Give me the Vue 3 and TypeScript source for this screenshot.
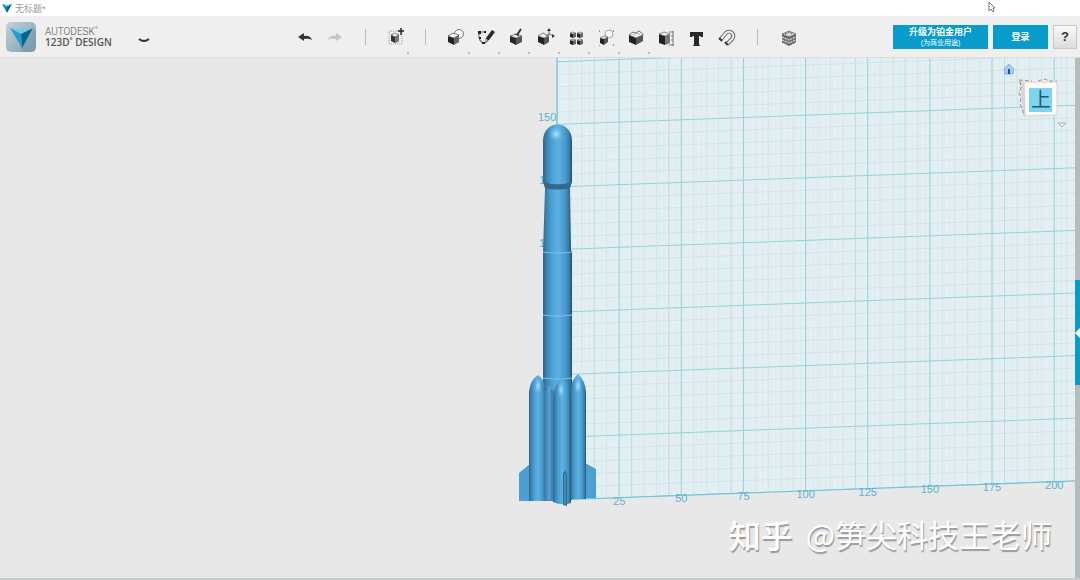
<script setup lang="ts">
import { ref } from 'vue'

interface Tool { id: string; label: string; more: boolean }

const tools: Tool[] = [
  { id: 'primitives', label: '基本体', more: true },
  { id: 'sketch', label: '草图', more: true },
  { id: 'construct', label: '构造', more: true },
  { id: 'modify', label: '修改', more: true },
  { id: 'pattern', label: '阵列', more: true },
  { id: 'group', label: '分组', more: true },
  { id: 'combine', label: '合并', more: true },
  { id: 'measure', label: '测量', more: false },
  { id: 'text', label: '文本', more: false },
  { id: 'snap', label: '吸附', more: false },
]
const active = ref('')

// Work plane geometry
const originX = 557
const originY = 500
const stepX = 62.15
const stepY = 62.6
const slope = -0.037
const planeRight = 1075

const verticals = Array.from({ length: 42 }, (_, i) => {
  const x = originX + (i * stepX) / 5
  return { x, y: originY + (x - originX) * slope, major: i % 5 === 0, strong: [3, 6, 9, 14, 24, 28, 36].includes(i) }
})
const fineVerticals = Array.from({ length: 208 }, (_, i) => {
  const x = originX + (i * stepX) / 25
  return { x, y: originY + (x - originX) * slope, show: i % 5 === 1 || i % 5 === 3 }
}).filter((l) => l.show)
const horizontals = Array.from({ length: 43 }, (_, i) => {
  const y = originY - (i * stepY) / 5
  return { y, y2: y + (planeRight - originX) * slope, major: i % 5 === 0 }
})
const axisLabels = [25, 50, 75, 100, 125, 150, 175, 200].map((v, i) => ({
  v,
  x: originX + (i + 1) * stepX,
  y: Math.round(originY + (i + 1) * stepX * slope + 7),
}))
</script>

<template>
  <div class="app">
    <div class="titlebar">
      <svg class="title-mark" viewBox="0 0 12 12" aria-hidden="true">
        <path d="M1 2L6 4L6 11Z" fill="#1683ad" /><path d="M11 2L6 4L6 11Z" fill="#0b5c80" /><path d="M1 2L6 3L11 2L6 5Z" fill="#52c0dd" />
      </svg>
      <span>无标题*</span>
    </div>

    <header class="header">
      <div class="brand">
        <svg class="logo" viewBox="0 0 30 30" aria-hidden="true">
          <defs>
            <linearGradient id="lg" x1="0" y1="0" x2="1" y2="1"><stop offset="0" stop-color="#c3d3da" /><stop offset="1" stop-color="#7c9dab" /></linearGradient>
          </defs>
          <rect width="30" height="30" rx="5" fill="url(#lg)" />
          <path d="M15 25L28 7L30 9V25Q30 30 25 30H18Z" fill="#7799a9" opacity=".6" />
          <path d="M4 6L15 11L16 26Z" fill="#259dc9" />
          <path d="M27 6L15 11L16 26Z" fill="#0a648d" />
          <path d="M4 6L15 8L27 6L15 12Z" fill="#67cbe4" />
        </svg>
        <div class="names"><span class="maker">AUTODESK˚</span><span class="product">123D˚ DESIGN</span></div>
        <button class="menu" type="button" aria-label="菜单">
          <svg viewBox="0 0 12 8"><path d="M1 3Q6 7 11 3" fill="none" stroke="#333" stroke-width="2" /></svg>
        </button>
      </div>

      <nav class="toolbar" aria-label="工具栏">
        <button class="tool" type="button" aria-label="撤消">
          <svg viewBox="0 0 30 40"><path d="M8 20L14 16V19Q20 18 22 23Q19 21 14 22V24Z" fill="#333" /></svg>
        </button>
        <button class="tool" type="button" aria-label="重做" disabled>
          <svg viewBox="0 0 30 40"><path d="M22 20L16 16V19Q10 18 8 23Q11 21 16 22V24Z" fill="#c4c4c4" /></svg>
        </button>
        <span class="sep"></span>
        <button class="tool more" type="button" aria-label="插入">
          <svg viewBox="0 0 30 40">
            <rect x="9" y="14" width="13" height="13" fill="none" stroke="#999" stroke-dasharray="1 1" />
            <path d="M11 18L15 17L19 18V24L15 26L11 24Z" fill="#333" /><path d="M11 18L15 16L19 18L15 20Z" fill="#eee" stroke="#444" stroke-width=".6" /><path d="M15 20L19 18V24L15 26Z" fill="#777" />
            <path d="M21 11V18M18 14H24" stroke="#222" stroke-width="1.4" />
          </svg>
        </button>
        <span class="sep"></span>
        <div class="tools">
          <button v-for="t in tools" :key="t.id" class="tool" :class="{ more: t.more }" type="button" :aria-label="t.label" :aria-pressed="active === t.id" @click="active = t.id">
            <svg viewBox="0 0 30 40">
              <g v-if="t.id === 'primitives'">
                <circle cx="18" cy="17" r="4.5" fill="#f5f5f5" stroke="#777" />
                <path d="M7 19L13 21V28L7 25Z" fill="#222" /><path d="M13 21L18 18V25L13 28Z" fill="#666" /><path d="M7 19L12 16L18 18L13 21Z" fill="#f4f4f4" stroke="#555" stroke-width=".7" />
              </g>
              <g v-else-if="t.id === 'sketch'">
                <path d="M8 15Q7 24 12 26Q16 26 17 22M8 15H14" fill="none" stroke="#777" stroke-width="1.2" />
                <g fill="#222"><rect x="7" y="14" width="3" height="3" /><rect x="8" y="20" width="2" height="2" /><rect x="11" y="25" width="3" height="2" /><rect x="13" y="14" width="2" height="2" /></g>
                <path d="M21 13L24 15L18 23L14 25L15 21Z" fill="#292929" /><path d="M14 25L15 22L17 23Z" fill="#ddd" />
              </g>
              <g v-else-if="t.id === 'construct'">
                <path d="M9 19L15 21V28L9 25Z" fill="#252525" /><path d="M15 21L21 19V25L15 28Z" fill="#555" /><path d="M9 19L15 17L21 19L15 21Z" fill="#eee" stroke="#555" stroke-width=".7" />
                <path d="M20 12L16 18" stroke="#333" stroke-width="2" /><path d="M14 17L18 19" stroke="#333" />
              </g>
              <g v-else-if="t.id === 'modify'">
                <path d="M7 19L13 21V28L7 25Z" fill="#222" /><path d="M13 21L18 19V25L13 28Z" fill="#555" /><path d="M7 19L12 16L18 19L13 21Z" fill="#eee" stroke="#555" stroke-width=".7" />
                <path d="M18 12V17M18 17L23 19M18 17L15 19" fill="none" stroke="#666" /><path d="M16 14L18 11L20 14ZM21 17L24 19L21 21Z" fill="#333" />
              </g>
              <g v-else-if="t.id === 'pattern'">
                <g v-for="(p, i) in [[9, 15], [16, 15], [9, 22], [16, 22]]" :key="i" :transform="`translate(${p[0]} ${p[1]})`">
                  <path d="M0 1L3 2V6L0 5Z" fill="#222" /><path d="M3 2L6 1V5L3 6Z" fill="#666" /><path d="M0 1L3 0L6 1L3 2Z" fill="#ccc" stroke="#555" stroke-width=".5" />
                </g>
              </g>
              <g v-else-if="t.id === 'group'">
                <circle cx="18" cy="17" r="4" fill="#f5f5f5" stroke="#aaa" />
                <path d="M9 21L13 22V28L9 26Z" fill="#222" /><path d="M13 22L17 20V25L13 28Z" fill="#555" /><path d="M9 21L13 19L17 20L13 22Z" fill="#eee" stroke="#555" stroke-width=".6" />
                <g fill="#999"><path d="M8 13H9V15H8ZM22 13H23V15H22ZM8 28H9V29H8ZM22 27H23V29H22Z" /></g>
              </g>
              <g v-else-if="t.id === 'combine'">
                <path d="M8 18L15 21V28L8 25Z" fill="#222" /><path d="M15 21L22 18V24L15 28Z" fill="#555" /><path d="M8 18L12 15L15 16L18 14L22 17V18L15 21Z" fill="#f0f0f0" stroke="#555" stroke-width=".8" /><path d="M12 18L16 16L19 18" fill="none" stroke="#888" stroke-width=".7" />
              </g>
              <g v-else-if="t.id === 'measure'">
                <path d="M8 17L14 19V28L8 26Z" fill="#222" /><path d="M14 19L19 17V26L14 28Z" fill="#777" /><path d="M8 17L13 15L19 17L14 19Z" fill="#eee" stroke="#666" stroke-width=".7" />
                <path d="M22 14V29M18 15H23M20 19H22M20 23H22M18 28H23" stroke="#777" />
              </g>
              <path v-else-if="t.id === 'text'" d="M9 15H22V20H20L19 19H18V27L19 29H12L13 27V19H12L11 20H9Z" fill="#292929" />
              <g v-else>
                <path d="M10 22L15 16A4 4 0 0 1 21 22L16 27" fill="none" stroke="#666" stroke-width="4" /><path d="M10 22L15 16A4 4 0 0 1 21 22L16 27" fill="none" stroke="#f2f2f2" stroke-width="2" />
                <path d="M8 21L11 24M14 25L17 28" stroke="#333" stroke-width="2" />
              </g>
            </svg>
          </button>
        </div>
        <span class="sep"></span>
        <button class="tool last" type="button" aria-label="材质">
          <svg viewBox="0 0 30 40">
            <path d="M8 17L15 14L22 17V25L15 29L8 25Z" fill="#777" /><path d="M8 17L15 14L22 17L15 20Z" fill="#d8d8d8" stroke="#666" stroke-width=".7" />
            <path d="M8 20L15 23L22 20M8 23L15 26L22 23" fill="none" stroke="#eee" stroke-dasharray="2 1" /><path d="M8 18L15 21L22 18M8 25L15 28L22 25M11 17L15 15L19 17" fill="none" stroke="#555" stroke-dasharray="2 1" />
          </svg>
        </button>
      </nav>

      <div class="account">
        <button class="upgrade" type="button"><b>升级为铂金用户</b><small>(为商业用途)</small></button>
        <button class="login" type="button">登录</button>
        <button class="help" type="button" aria-label="帮助">?</button>
      </div>
    </header>

    <main class="workspace">
      <svg class="scene" viewBox="0 58 1080 520" preserveAspectRatio="xMidYMin slice" role="img" aria-label="火箭模型">
        <defs>
          <linearGradient id="metal">
            <stop offset="0" stop-color="#2d6586" /><stop offset=".12" stop-color="#3c83b1" /><stop offset=".3" stop-color="#4c9fd2" /><stop offset=".52" stop-color="#5bb1e2" /><stop offset=".75" stop-color="#4b9ccf" /><stop offset=".9" stop-color="#3a7fab" /><stop offset="1" stop-color="#244f6b" />
          </linearGradient>
          <radialGradient id="shine"><stop offset="0" stop-color="#b5e8ff" /><stop offset="1" stop-color="#62b7e7" stop-opacity="0" /></radialGradient>
          <clipPath id="plane"><path d="M557 58H1075V481L557 500Z" /></clipPath>
        </defs>
        <path d="M557 58H1075V481L557 500Z" fill="#e4eff2" />
        <g clip-path="url(#plane)">
          <line v-for="(l, i) in fineVerticals" :key="'f' + i" :x1="l.x" :x2="l.x" y1="58" :y2="l.y" class="fine" />
          <line v-for="(l, i) in horizontals" :key="'h' + i" :x1="originX" :x2="planeRight" :y1="l.y" :y2="l.y2" :class="l.major ? 'major' : 'minor'" />
          <line v-for="(l, i) in verticals" :key="'v' + i" :x1="l.x" :x2="l.x" y1="58" :y2="l.y" :class="l.major ? 'major' : l.strong ? 'strong' : 'minor'" />
        </g>
        <path d="M557 58V500L1075 481" fill="none" stroke="#6fc4da" stroke-width="1.2" />
        <g class="axis">
          <text v-for="l in axisLabels" :key="l.v" :x="l.x" :y="l.y" text-anchor="middle">{{ l.v }}</text>
          <text x="538" y="121">150</text><text x="539" y="184">125</text><text x="539" y="247">100</text>
        </g>

        <g class="rocket">
          <path d="M519 473L530 464V501H519ZM585 463L596 469V498H585Z" fill="#4b9fd2" />
          <path d="M543 251H572V500H543Z" fill="url(#metal)" />
          <path d="M545 188H570L571 252H543Z" fill="url(#metal)" />
          <path d="M543 181H572L569 189H546Z" fill="#376f91" />
          <path d="M543 141C543 119 572 119 572 141V182Q557 187 543 182Z" fill="url(#metal)" />
          <path d="M543 182Q557 187 572 182L570 188Q557 191 545 188Z" fill="#33698a" />
          <ellipse cx="556" cy="134" rx="8" ry="8" fill="url(#shine)" />
          <path d="M543 252Q557 254 572 252M543 315Q557 317 572 315M543 378Q557 380 572 378" fill="none" stroke="#7bc4eb" stroke-width="1.2" />
          <path d="M529 392Q530 380 538 375Q545 380 546 392V501H529Z" fill="url(#metal)" />
          <path d="M570 392Q571 380 578 374Q585 380 586 392V499H570Z" fill="url(#metal)" />
          <path d="M545 390H554V501H545Z" fill="#4288b7" />
          <path d="M549 386V500" stroke="#559fce" stroke-width="3" />
          <path d="M553 398Q554 384 562 379Q570 384 571 398V503Q562 506 553 502Z" fill="url(#metal)" />
          <ellipse cx="538" cy="386" rx="4" ry="9" fill="url(#shine)" /><ellipse cx="578" cy="386" rx="4" ry="9" fill="url(#shine)" /><ellipse cx="561" cy="390" rx="4" ry="9" fill="url(#shine)" />
          <path d="M563 474L565 470L567 475V506L563 505Z" fill="#2f6b90" /><path d="M565 474V505" stroke="#59aada" />
        </g>
      </svg>

      <div class="view-nav">
        <button class="home" type="button" aria-label="主视图">
          <svg viewBox="0 0 12 12"><path d="M1 6L6 1L11 6L10 11H2Z" fill="#a9c9ee" stroke="#8fb2dd" /><path d="M5 6H7V11H5Z" fill="#234f9c" /></svg>
        </button>
        <button class="cube" type="button" aria-label="视图方向">
          <svg viewBox="0 0 42 40">
            <path d="M2 2L12 4L9 38L5 37Z" fill="#d8d8d8" /><path d="M2 2H40V7H9Z" fill="#eee" />
            <path d="M6 4H39V37L7 38Z" fill="#fafafa" stroke="#ccc" stroke-width=".8" />
            <path d="M1 2L14 3M20 3L27 1L31 3L39 3M2 3L3 10L1 14L3 20L2 26L5 33L6 38" fill="none" stroke="#a08f8f" stroke-dasharray="4 2" />
            <rect x="11" y="10" width="23" height="24" fill="#7cd4ef" />
          </svg>
          <span>上</span>
        </button>
        <button class="view-menu" type="button" aria-label="视图选项">
          <svg viewBox="0 0 10 8"><path d="M1 2H9L5 6Z" fill="#f7f7f7" stroke="#aaa" /></svg>
        </button>
      </div>

      <p class="watermark"><b>知乎</b><span>@笋尖科技王老师</span></p>
      <aside class="drawer">
        <button class="drawer-handle" type="button" aria-label="展开面板"><svg viewBox="0 0 5 10"><path d="M5 0L0 5L5 10Z" fill="#fff" /></svg></button>
      </aside>
    </main>

    <svg class="pointer" viewBox="0 0 8 12" aria-hidden="true"><path d="M1 1V10L3 8L5 11L6 10L5 7H7Z" fill="#fff" stroke="#555" stroke-width=".8" /></svg>
  </div>
</template>

<style>
body { margin: 0; }
</style>

<style scoped>
.app { position: relative; display: flex; flex-direction: column; min-height: 100vh; background: #e8e8e8; font-family: "Liberation Sans", "Noto Sans CJK SC", sans-serif; overflow: hidden; }
button { margin: 0; padding: 0; border: 0; background: none; font-family: inherit; cursor: pointer; }
svg { display: block; }
.titlebar { display: flex; align-items: center; gap: 2px; height: 16px; padding-left: 1px; background: #fff; color: #999; font-size: 9px; }
.title-mark { width: 12px; height: 12px; }
.header { display: grid; grid-template-columns: 290px 1fr auto; align-items: center; height: 41px; background: #efefef; border-bottom: 1px solid #ddd; }
.brand { display: flex; align-items: center; padding-left: 6px; }
.logo { width: 30px; height: 30px; }
.names { display: flex; flex-direction: column; width: 76px; margin-left: 9px; color: #555; font-family: Roboto, sans-serif; font-size: 10px; line-height: 11px; white-space: nowrap; }
.maker { font-weight: 300; }
.product { font-family: "Open Sans", sans-serif; font-weight: 600; }
.menu { display: flex; align-items: center; justify-content: center; width: 24px; height: 24px; margin-left: 11px; }
.menu svg { width: 12px; height: 8px; margin-top: 6px; }
.toolbar, .tools { display: flex; align-items: center; }
.tools { padding: 0 1px; }
.tool { position: relative; flex: none; width: 30px; height: 40px; }
.tool svg { width: 30px; height: 40px; }
.last { margin-left: 2px; }
.more::after { content: ""; position: absolute; right: 1px; bottom: 3px; width: 2px; height: 2px; background: #bbb; }
.sep { flex: none; width: 1px; height: 16px; margin: 0 14px 0 15px; background: #bbb; }
.account { display: flex; gap: 5px; padding-right: 3px; }
.account button { height: 24px; color: #fff; background: #089cca; }
.upgrade { display: flex; flex-direction: column; align-items: center; justify-content: center; width: 95px; }
.upgrade b { font-size: 9px; line-height: 12px; }
.upgrade small { font-size: 7px; line-height: 10px; }
.login { width: 55px; font-size: 9px; font-weight: 700; }
.account .help { width: 24px; border: 1px solid #c8c8c8; background: linear-gradient(#f9f9f9, #dcdcdc); color: #333; font-size: 13px; font-weight: 700; }
.workspace { position: relative; flex: 1; min-height: 400px; border-bottom: 2px solid #c7cbcc; }
.scene { position: absolute; inset: 0; width: 100%; height: 100%; }
.fine { stroke: #d9e8ec; stroke-width: .5; }
.minor { stroke: #c8e0e6; stroke-width: .7; }
.strong { stroke: #b2d9e2; stroke-width: .9; }
.major { stroke: #95cfdd; stroke-width: 1; }
.axis { fill: #5ab3cf; font: 11px "Liberation Sans", sans-serif; }
.view-nav { position: absolute; top: 5px; right: 10px; width: 68px; height: 68px; }
.home { position: absolute; left: 1px; top: 0; width: 12px; height: 12px; }
.home svg { width: 12px; height: 12px; }
.cube { position: absolute; left: 8px; top: 15px; width: 42px; height: 40px; margin-left: 8px; }
.cube span { position: absolute; left: 12px; top: 10px; width: 22px; color: #285966; font-size: 20px; line-height: 24px; }
.view-menu { position: absolute; left: 55px; top: 58px; width: 10px; height: 8px; }
.watermark { position: absolute; right: 28px; bottom: 21px; display: flex; gap: 13px; margin: 0; color: #fff; font-family: "Noto Sans CJK SC", sans-serif; font-size: 31px; line-height: 46px; white-space: nowrap; text-shadow: 1px 2px 1px #999; }
.watermark b { font-size: 32px; font-weight: 500; }
.drawer { position: absolute; top: 0; right: 0; bottom: 0; width: 5px; background: #b5bcbd; }
.drawer-handle { display: flex; align-items: center; width: 5px; height: 105px; margin-top: 222px; background: #079bc7; }
.drawer-handle svg { width: 5px; height: 10px; }
.pointer { position: absolute; top: 1px; right: 84px; width: 8px; height: 12px; }
</style>
